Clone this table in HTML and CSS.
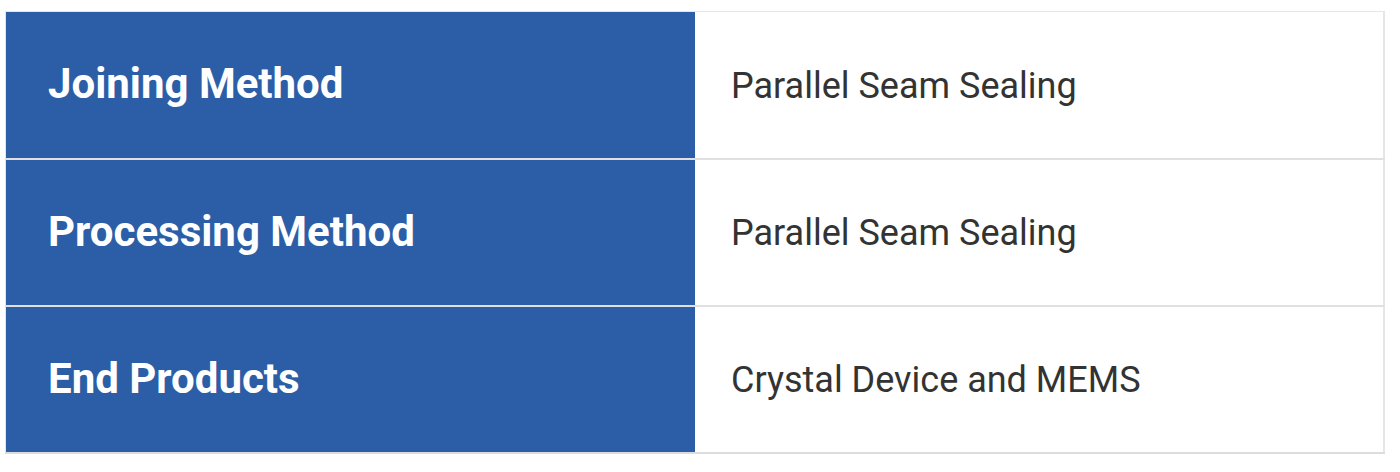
FILE: index.html
```html
<!DOCTYPE html>
<html>
<head>
<meta charset="utf-8">
<link rel="stylesheet" href="styles.css">
</head>
<body>
<table class="spec">
  <tr><th class="label">Joining Method</th><td class="value">Parallel Seam Sealing</td></tr>
  <tr><th class="label">Processing Method</th><td class="value">Parallel Seam Sealing</td></tr>
  <tr><th class="label">End Products</th><td class="value">Crystal Device and MEMS</td></tr>
</table>
</body>
</html>
```
FILE: styles.css
```css
html, body { margin: 0; padding: 0; background: #fff; }
body { padding: 11px 0 0 5px; font-family: Roboto, "Liberation Sans", sans-serif; }
.spec {
  border-collapse: collapse;
  width: 1380px;
  border: 1px solid #e6e6e6;
  border-bottom: 2px solid #dcdcdc;
  border-right: 2px solid #e6e6e6;
}
.spec tr { height: 147px; }
.spec th, .spec td {
  border-top: 2px solid #e0e0e0;
  padding: 0;
  vertical-align: middle;
  text-align: left;
}
.spec tr:first-child th, .spec tr:first-child td { border-top: 1px solid #e6e6e6; }
.label {
  width: 647px;
  background: #2b5ea6;
  color: #fff;
  font-weight: 700;
  font-size: 42px;
  padding-left: 42px !important;
  padding-bottom: 2px !important;
}
.value {
  color: #333;
  font-weight: 400;
  font-size: 36px;
  padding-left: 36px !important;
  padding-top: 2px !important;
}
```
